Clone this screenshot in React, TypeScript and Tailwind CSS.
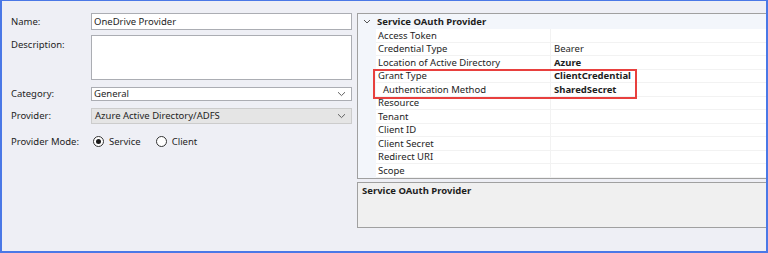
import React from "react";

const font = { fontFamily: '"Noto Sans", "Open Sans", sans-serif' };

function Chevron() {
  return (
    <svg width="9" height="6" viewBox="0 0 9 6" className="absolute right-[5px] top-1/2 -translate-y-1/2">
      <path d="M1 1.2 L4.5 4.6 L8 1.2" fill="none" stroke="#606060" strokeWidth="1" />
    </svg>
  );
}

const rows: { name: string; value?: string; bold?: boolean; indent?: boolean }[] = [
  { name: "Access Token" },
  { name: "Credential Type", value: "Bearer" },
  { name: "Location of Active Directory", value: "Azure", bold: true },
  { name: "Grant Type", value: "ClientCredential", bold: true },
  { name: "Authentication Method", value: "SharedSecret", bold: true, indent: true },
  { name: "Resource" },
  { name: "Tenant" },
  { name: "Client ID" },
  { name: "Client Secret" },
  { name: "Redirect URI" },
  { name: "Scope" },
];

export default function App() {
  return (
    <div
      className="w-[768px] h-[253px] bg-[#eeeff5] border-[#4a78e6] border-l-2 border-r-2 border-b-2 border-t-[1px] text-[9.5px] text-[#1e1e1e] leading-none overflow-hidden"
      style={font}
    >
      <div className="flex pt-[12px]">
        {/* Left form */}
        <div className="w-[350px] pl-[9px] flex flex-col">
          <div className="flex items-center h-[17px]">
            <div className="w-[80px]">Name:</div>
            <div className="w-[261px] h-[17px] bg-white border border-[#abadb3] flex items-center pl-[2px]">OneDrive Provider</div>
          </div>
          <div className="flex mt-[5px]">
            <div className="w-[80px] pt-[5px]">Description:</div>
            <div className="w-[261px] h-[45px] bg-white border border-[#abadb3]" />
          </div>
          <div className="flex items-center mt-[7px]">
            <div className="w-[80px]">Category:</div>
            <div className="relative w-[261px] h-[14px] bg-white border border-[#abadb3] flex items-center pl-[2px]">
              General
              <Chevron />
            </div>
          </div>
          <div className="flex items-center mt-[7px]">
            <div className="w-[80px]">Provider:</div>
            <div className="relative w-[261px] h-[16px] bg-[#e5e5e5] border border-[#cccccc] flex items-center pl-[3px]">
              Azure Active Directory/ADFS
              <Chevron />
            </div>
          </div>
          <div className="flex items-center mt-[12px]">
            <div className="w-[82px]">Provider Mode:</div>
            <div className="flex items-center gap-[5px]">
              <div className="w-[11px] h-[11px] rounded-full border border-[#333333] bg-white flex items-center justify-center">
                <div className="w-[5px] h-[5px] rounded-full bg-[#1a1a1a]" />
              </div>
              <span>Service</span>
            </div>
            <div className="flex items-center gap-[5px] ml-[15px]">
              <div className="w-[11px] h-[11px] rounded-full border border-[#333333] bg-white" />
              <span>Client</span>
            </div>
          </div>
        </div>

        {/* Right property grid */}
        <div className="ml-[5px] w-[409px] flex flex-col">
          <div className="relative h-[166px] bg-white border border-[#a0a0a0] border-r-0 flex flex-col">
            <div className="h-[15px] bg-[#f3f6fb] flex items-center">
              <div className="w-[18px] flex justify-center">
                <svg width="8" height="5" viewBox="0 0 8 5">
                  <path d="M1 1 L4 4 L7 1" fill="none" stroke="#555555" strokeWidth="1" />
                </svg>
              </div>
              <div className="font-bold pl-[1px]">Service OAuth Provider</div>
            </div>
            <div className="flex flex-1">
              <div className="w-[18px] bg-[#f3f6fb]" />
              <div className="flex-1 flex flex-col">
                {rows.map((r) => (
                  <div key={r.name} className="h-[13.5px] flex items-center border-b border-[#f2f2f2]">
                    <div className={`w-[175px] h-full flex items-center border-r border-[#f2f2f2] ${r.indent ? "pl-[7px]" : "pl-[2px]"}`}>
                      {r.name}
                    </div>
                    <div className={`pl-[3px] ${r.bold ? "font-bold" : ""}`}>{r.value ?? ""}</div>
                  </div>
                ))}
              </div>
            </div>
            <div className="absolute left-[15px] top-[55px] w-[264px] h-[30px] border-2 border-[#e8403e]" />
          </div>
          <div className="mt-[3px] h-[46px] bg-[#f0f0f0] border border-[#a0a0a0] border-r-0 pl-[4px] pt-[3px]">
            <div className="font-bold">Service OAuth Provider</div>
          </div>
        </div>
      </div>
    </div>
  );
}
